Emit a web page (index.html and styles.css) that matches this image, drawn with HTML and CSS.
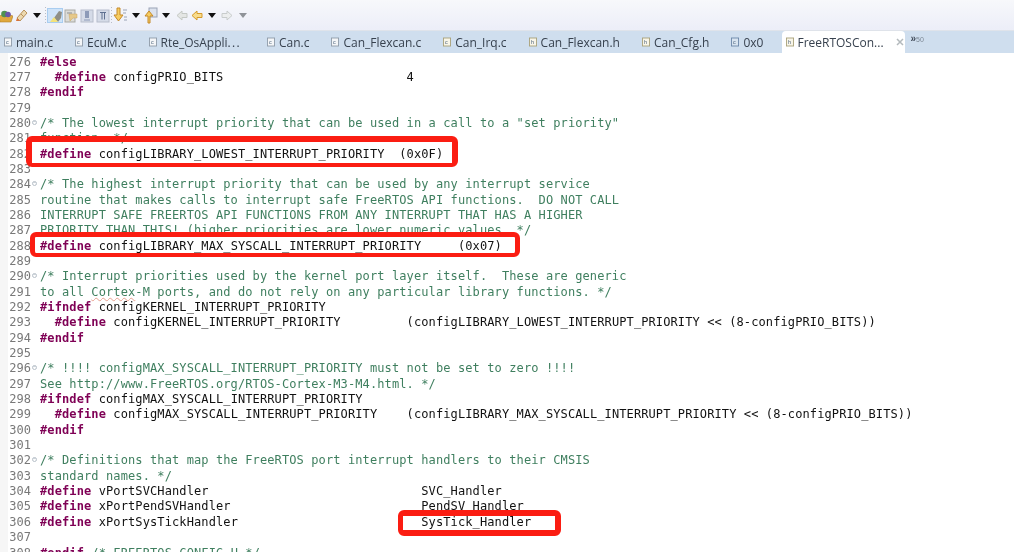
FILE: index.html
```html
<!DOCTYPE html>
<html lang="en">
<head>
<meta charset="utf-8">
<title>FreeRTOSConfig.h</title>
<link rel="stylesheet" href="styles.css">
</head>
<body>
<div class="toolbar">
  <span class="tool tool-first"><svg width="15" height="14" viewBox="0 0 15 14"><path d="M1 7l3-1h8l3 1-2 6H2z" fill="#e0a83e" stroke="#b27f26" stroke-width=".6"/><circle cx="6.500" cy="5" r="3.300" fill="#4f9150"/><circle cx="10" cy="5.500" r="2.800" fill="#6a55a8"/></svg></span>
  <span class="tool"><svg width="15" height="15" viewBox="0 0 15 15"><path d="M3 10L10 2l3 3-7 8z" fill="#ecd9b0" stroke="#b8925c"/><path d="M2 13l1-3 3 3z" fill="#d9733a"/><path d="M7 6l3 3" stroke="#b8925c"/></svg></span>
  <span class="tool"><i class="drop"></i></span>
  <span class="sep"></span>
  <span class="tool on"><svg width="15" height="14" viewBox="0 0 15 14"><path d="M6 9l5-7 3 1-1 6-3 4z" fill="#8f8f86"/><path d="M2 13l4-5 4 5z" fill="#f4e27a"/></svg></span>
  <span class="tool"><svg width="14" height="14" viewBox="0 0 14 14"><rect x="1" y="1" width="10" height="12" fill="#dcdcd8" stroke="#a9a9a4"/><path d="M5 5h8v4H9l-3 3z" fill="#e6c98a" stroke="#c9a664" stroke-width=".5"/><path d="M3 4h5" stroke="#8f8f8f"/></svg></span>
  <span class="tool"><svg width="14" height="14" viewBox="0 0 14 14"><rect x="1" y="1" width="12" height="12" fill="#d5dbe8" stroke="#b6bccb"/><rect x="5" y="2" width="4" height="7" fill="#8d9ab8"/><path d="M4 11h6" stroke="#8d9ab8"/></svg></span>
  <span class="tool"><svg width="14" height="14" viewBox="0 0 14 14"><rect x="1" y="1" width="12" height="12" fill="#d5dbe8" stroke="#b6bccb"/><path d="M4 3.500h6M6 3.500v7M8.500 3.500v7" stroke="#5f7090" fill="none"/></svg></span>
  <span class="sep"></span>
  <span class="tool tool-tight"><svg width="15" height="17" viewBox="0 0 15 17"><path d="M4 1h3v7h3l-4.500 6L1 8h3z" fill="#f6cc60" stroke="#c4892a"/><path d="M10 3h4M10 6h3M11 13h3M11 10h3" stroke="#9aa3b5"/></svg></span>
  <span class="tool tool-tight"><i class="drop"></i></span>
  <span class="tool tool-tight"><svg width="14" height="17" viewBox="0 0 14 17"><rect x="5" y="1" width="8" height="9" fill="#dde3ee" stroke="#9aa3b5"/><path d="M4 16V9H1l4-5 4 5H6v7z" fill="#f6cc60" stroke="#c4892a"/></svg></span>
  <span class="tool tool-tight"><i class="drop"></i></span>
  <span class="tool tool-tight"><svg width="12" height="11" viewBox="0 0 12 11"><path d="M1 5.500L6 1v2.500h5v4H6V10z" fill="#e4e6e4" stroke="#c4c8c4"/></svg></span>
  <span class="tool tool-tight"><svg width="12" height="11" viewBox="0 0 12 11"><path d="M1 5.500L6 1v2.500h5v4H6V10z" fill="#f8dc8c" stroke="#d59a2a"/></svg></span>
  <span class="tool tool-tight"><i class="drop"></i></span>
  <span class="tool tool-tight"><svg width="12" height="11" viewBox="0 0 12 11"><path d="M11 5.500L6 1v2.500H1v4h5V10z" fill="#eceeee" stroke="#c8cccc"/></svg></span>
  <span class="tool tool-tight"><i class="drop drop-off"></i></span>
</div>
<div class="tabs">
  <span class="tab"><svg class="doc" viewBox="0 0 9 10"><rect x=".5" y=".5" width="8" height="9" fill="#f4f6f8" stroke="#8e9aa8"/><text x="2.300" y="7.500" class="doc-l">c</text></svg>main.c</span>
  <span class="tab"><svg class="doc" viewBox="0 0 9 10"><rect x=".5" y=".5" width="8" height="9" fill="#f4f6f8" stroke="#8e9aa8"/><text x="2.300" y="7.500" class="doc-l">c</text></svg>EcuM.c</span>
  <span class="tab tab-clip"><svg class="doc" viewBox="0 0 9 10"><rect x=".5" y=".5" width="8" height="9" fill="#f4f6f8" stroke="#8e9aa8"/><text x="2.300" y="7.500" class="doc-l">c</text></svg><span>Rte_OsAppli<span class="dots">...</span></span></span>
  <span class="tab"><svg class="doc" viewBox="0 0 9 10"><rect x=".5" y=".5" width="8" height="9" fill="#f4f6f8" stroke="#8e9aa8"/><text x="2.300" y="7.500" class="doc-l">c</text></svg>Can.c</span>
  <span class="tab"><svg class="doc" viewBox="0 0 9 10"><rect x=".5" y=".5" width="8" height="9" fill="#f4f6f8" stroke="#8e9aa8"/><text x="2.300" y="7.500" class="doc-l">c</text></svg>Can_Flexcan.c</span>
  <span class="tab"><svg class="doc" viewBox="0 0 9 10"><rect x=".5" y=".5" width="8" height="9" fill="#f8f5e8" stroke="#a8a078"/><text x="2.300" y="7.500" class="doc-l">c</text></svg>Can_Irq.c</span>
  <span class="tab"><svg class="doc" viewBox="0 0 9 10"><rect x=".5" y=".5" width="8" height="9" fill="#f8f5e8" stroke="#a8a078"/><text x="2.300" y="7.500" class="doc-l">h</text></svg>Can_Flexcan.h</span>
  <span class="tab"><svg class="doc" viewBox="0 0 9 10"><rect x=".5" y=".5" width="8" height="9" fill="#f8f5e8" stroke="#a8a078"/><text x="2.300" y="7.500" class="doc-l">h</text></svg>Can_Cfg.h</span>
  <span class="tab tab-last"><svg class="doc" viewBox="0 0 9 10"><rect x=".5" y=".5" width="8" height="9" fill="#d8e4f0" stroke="#6a86a8"/><text x="2.300" y="7.500" class="doc-l">c</text></svg>0x0</span>
  <span class="tab tab-active"><svg class="doc" viewBox="0 0 9 10"><rect x=".5" y=".5" width="8" height="9" fill="#f8f5e8" stroke="#a8a078"/><text x="2.300" y="7.500" class="doc-l">h</text></svg>FreeRTOSCon...<svg class="close" width="8" height="8" viewBox="0 0 8 8"><path d="M1 1l6 6M7 1L1 7" stroke="#b4babd" stroke-width="1.500"/></svg></span>
  <span class="more">»<small>50</small></span>
</div>
<div class="editor">
<div class="ln"><span class="num">276</span><span class="fold"></span><code><b>#else</b></code></div>
<div class="ln"><span class="num">277</span><span class="fold"></span><code>  <b>#define</b> configPRIO_BITS                         4</code></div>
<div class="ln"><span class="num">278</span><span class="fold"></span><code><b>#endif</b></code></div>
<div class="ln"><span class="num">279</span><span class="fold"></span><code></code></div>
<div class="ln"><span class="num">280</span><span class="fold fold-on"></span><code><em>/* The lowest interrupt priority that can be used in a call to a "set priority"</em></code></div>
<div class="ln"><span class="num">281</span><span class="fold"></span><code><em>function. */</em></code></div>
<div class="ln"><span class="num">282</span><span class="fold"></span><code><b>#define</b> configLIBRARY_LOWEST_INTERRUPT_PRIORITY  (0x0F)</code></div>
<div class="ln"><span class="num">283</span><span class="fold"></span><code></code></div>
<div class="ln"><span class="num">284</span><span class="fold fold-on"></span><code><em>/* The highest interrupt priority that can be used by any interrupt service</em></code></div>
<div class="ln"><span class="num">285</span><span class="fold"></span><code><em>routine that makes calls to interrupt safe FreeRTOS API functions.  DO NOT CALL</em></code></div>
<div class="ln"><span class="num">286</span><span class="fold"></span><code><em>INTERRUPT SAFE FREERTOS API FUNCTIONS FROM ANY INTERRUPT THAT HAS A HIGHER</em></code></div>
<div class="ln"><span class="num">287</span><span class="fold"></span><code><em>PRIORITY THAN THIS! (higher priorities are lower numeric values. */</em></code></div>
<div class="ln"><span class="num">288</span><span class="fold"></span><code><b>#define</b> configLIBRARY_MAX_SYSCALL_INTERRUPT_PRIORITY     (0x07)</code></div>
<div class="ln"><span class="num">289</span><span class="fold"></span><code></code></div>
<div class="ln"><span class="num">290</span><span class="fold fold-on"></span><code><em>/* Interrupt priorities used by the kernel port layer itself.  These are generic</em></code></div>
<div class="ln"><span class="num">291</span><span class="fold"></span><code><em>to all <u>Cortex</u>-M ports, and do not rely on any particular library functions. */</em></code></div>
<div class="ln"><span class="num">292</span><span class="fold"></span><code><b>#ifndef</b> configKERNEL_INTERRUPT_PRIORITY</code></div>
<div class="ln"><span class="num">293</span><span class="fold"></span><code>  <b>#define</b> configKERNEL_INTERRUPT_PRIORITY         (configLIBRARY_LOWEST_INTERRUPT_PRIORITY &lt;&lt; (8-configPRIO_BITS))</code></div>
<div class="ln"><span class="num">294</span><span class="fold"></span><code><b>#endif</b></code></div>
<div class="ln"><span class="num">295</span><span class="fold"></span><code></code></div>
<div class="ln"><span class="num">296</span><span class="fold fold-on"></span><code><em>/* !!!! configMAX_SYSCALL_INTERRUPT_PRIORITY must not be set to zero !!!!</em></code></div>
<div class="ln"><span class="num">297</span><span class="fold"></span><code><em>See http://www.FreeRTOS.org/RTOS-Cortex-M3-M4.html. */</em></code></div>
<div class="ln"><span class="num">298</span><span class="fold"></span><code><b>#ifndef</b> configMAX_SYSCALL_INTERRUPT_PRIORITY</code></div>
<div class="ln"><span class="num">299</span><span class="fold"></span><code>  <b>#define</b> configMAX_SYSCALL_INTERRUPT_PRIORITY    (configLIBRARY_MAX_SYSCALL_INTERRUPT_PRIORITY &lt;&lt; (8-configPRIO_BITS))</code></div>
<div class="ln"><span class="num">300</span><span class="fold"></span><code><b>#endif</b></code></div>
<div class="ln"><span class="num">301</span><span class="fold"></span><code></code></div>
<div class="ln"><span class="num">302</span><span class="fold fold-on"></span><code><em>/* Definitions that map the FreeRTOS port interrupt handlers to their CMSIS</em></code></div>
<div class="ln"><span class="num">303</span><span class="fold"></span><code><em>standard names. */</em></code></div>
<div class="ln"><span class="num">304</span><span class="fold"></span><code><b>#define</b> vPortSVCHandler                             SVC_Handler</code></div>
<div class="ln"><span class="num">305</span><span class="fold"></span><code><b>#define</b> xPortPendSVHandler                          PendSV_Handler</code></div>
<div class="ln"><span class="num">306</span><span class="fold"></span><code><b>#define</b> xPortSysTickHandler                         SysTick_Handler</code></div>
<div class="ln"><span class="num">307</span><span class="fold"></span><code></code></div>
<div class="ln"><span class="num">308</span><span class="fold"></span><code><b>#endif</b> <em>/* FREERTOS_CONFIG_H */</em></code></div>
</div>
<div class="mark mark-a"></div>
<div class="mark mark-b"></div>
<div class="mark mark-c"></div>
</body>
</html>
```
FILE: styles.css
```css
html, body {
  margin: 0;
  height: 552px;
  overflow: hidden;
  background: #fff;
}
body {
  position: relative;
}
.toolbar {
  height: 31px;
  box-sizing: border-box;
  display: flex;
  align-items: flex-start;
  padding-top: 7px;
  background: linear-gradient(#f7f8fb, #eceef8);
  border-bottom: 1px solid #dfe3ea;
  filter: blur(0.5px);
}
.tool {
  width: 16px;
  height: 17px;
  flex: none;
  display: flex;
  align-items: center;
  justify-content: center;
  box-sizing: border-box;
}
.tool-first {
  margin-left: -3px;
}
.tool-tight {
  width: 15.25px;
}
.on {
  background: #cfe3f8;
  outline: 1px solid #a9cdf0;
  outline-offset: -1px;
  height: 15px;
  margin-top: 1px;
}
.sep {
  width: 2px;
  height: 17px;
  flex: none;
  background: repeating-linear-gradient(#b9bdc6 0 1px, transparent 1px 3px);
  background-size: 1px 100%;
  background-repeat: no-repeat;
}
.drop {
  display: block;
  width: 0;
  height: 0;
  border-left: 4px solid transparent;
  border-right: 4px solid transparent;
  border-top: 5px solid #111;
}
.drop-off {
  border-top-color: #8f9398;
}
.tabs {
  height: 22px;
  display: flex;
  align-items: stretch;
  padding-left: 4px;
  background: #cfdeee;
  font: 12px/21px "Open Sans", "Noto Sans", sans-serif;
  color: #37414e;
  filter: blur(0.3px);
}
.tab {
  display: flex;
  align-items: center;
  gap: 4px;
  margin-right: 22px;
  white-space: nowrap;
}
.tab-clip {
  margin-right: 26px;
}
.tab-last {
  margin-right: 19px;
}
.dots {
  letter-spacing: 1.300px;
}
.tab-active {
  background: #fff;
  margin: 0;
  padding-left: 4px;
  gap: 3px;
  width: 123px;
  box-sizing: border-box;
  border-radius: 4px 4px 0 0;
}
.doc {
  width: 8px;
  height: 10px;
  flex: none;
}
.doc-l {
  font: 6px "Liberation Sans", sans-serif;
  fill: #49607a;
}
.close {
  margin-left: 9px;
  flex: none;
}
.more {
  margin-left: 5px;
  font: 10px/15px "Liberation Sans", sans-serif;
  font-weight: bold;
  color: #404a58;
}
.more small {
  font-size: 7px;
  font-weight: normal;
  color: #7c8894;
}
.editor {
  height: 499px;
  box-sizing: border-box;
  padding-top: 1.500px;
  overflow: hidden;
  background: linear-gradient(90deg, #f6f6f6 0 8px, #fff 8px);
  font: 12px/15.35px "DejaVu Sans Mono", "Liberation Mono", monospace;
  letter-spacing: 0.107px;
  filter: blur(0.3px);
}
.ln {
  display: flex;
  height: 15.35px;
  white-space: pre;
}
.num {
  width: 31px;
  flex: none;
  text-align: right;
  color: #787878;
  letter-spacing: 0;
}
.fold {
  width: 9px;
  flex: none;
  position: relative;
}
.fold-on::before {
  content: "";
  position: absolute;
  left: 1px;
  top: 4px;
  width: 5px;
  height: 5px;
  border-radius: 50%;
  background: #fff;
  border: 1px solid #b7c0c8;
  box-sizing: border-box;
  box-shadow: inset 0 2px 0 -1px #c6ced5;
}
code {
  font: inherit;
  color: #111;
}
code b {
  color: #7f0055;
}
code em {
  font-style: normal;
  color: #3f7f5f;
}
code u {
  text-decoration: underline wavy #e8a090 1px;
}
.mark {
  position: absolute;
  box-sizing: border-box;
  border: 5px solid #fb1d12;
  border-radius: 6px;
}
.mark-a {
  left: 26px;
  top: 136px;
  width: 432px;
  height: 31px;
  border-width: 6px 6px 4px 6px;
}
.mark-b {
  left: 30px;
  top: 232px;
  width: 490px;
  height: 25px;
  border-bottom-width: 4px;
}
.mark-c {
  left: 398px;
  top: 510px;
  width: 163px;
  height: 26px;
  border-width: 6px 6px 6px 5px;
}
```
